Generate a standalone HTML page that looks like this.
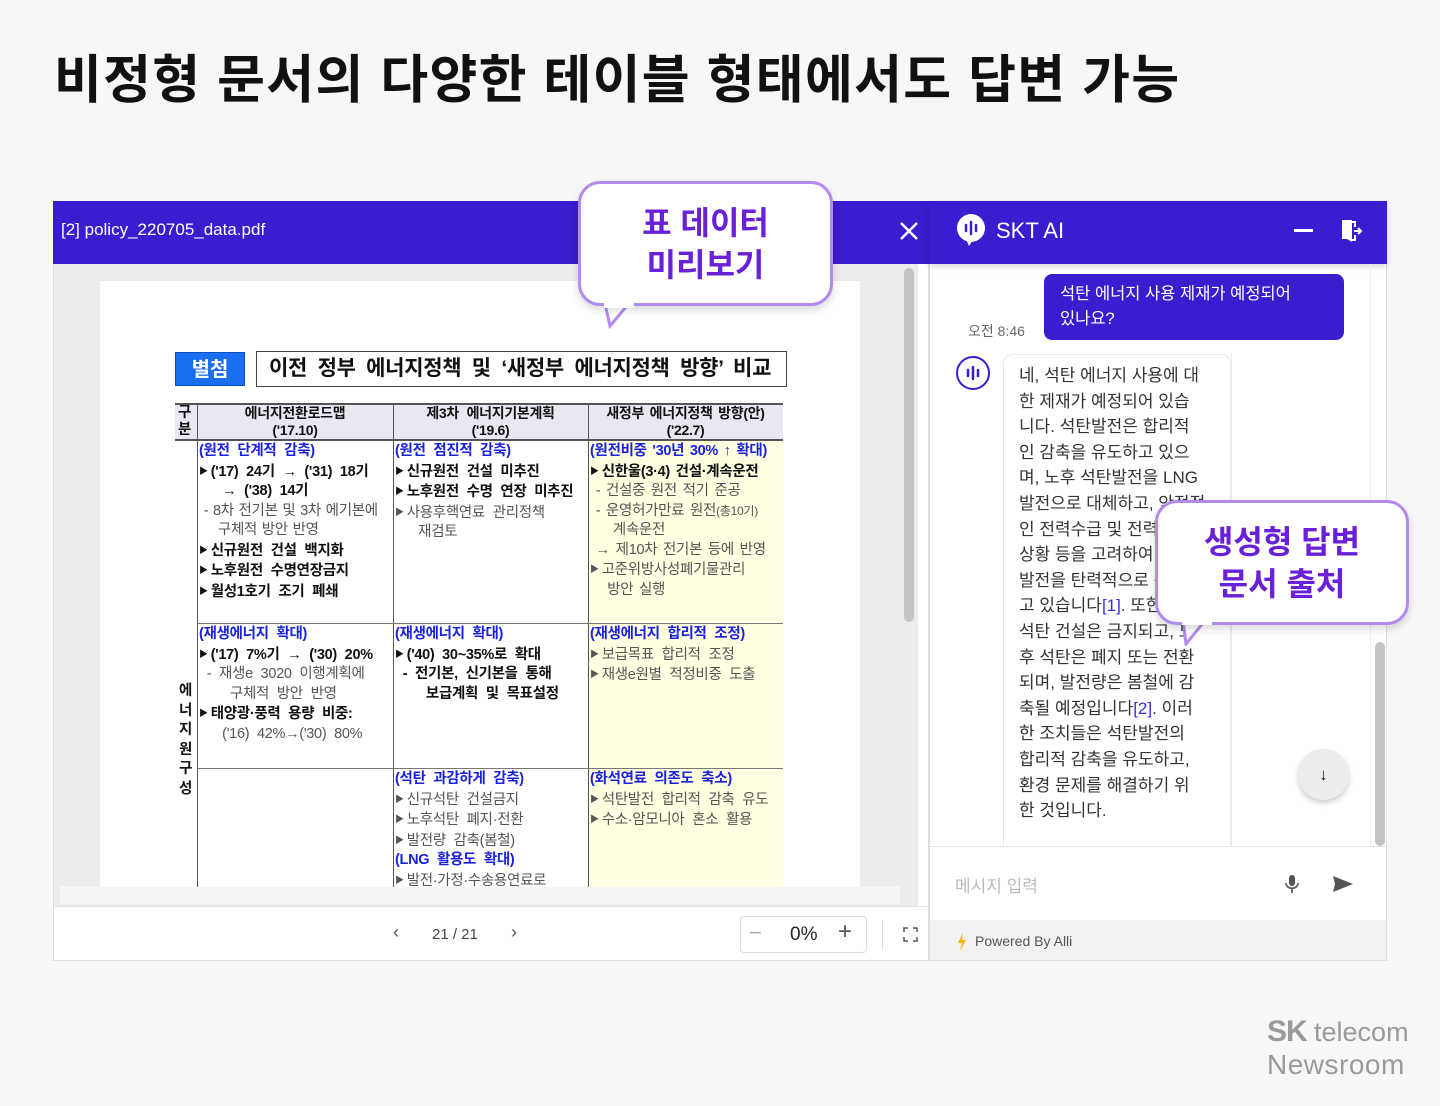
<!DOCTYPE html>
<html><head><meta charset="utf-8">
<style>
*{margin:0;padding:0;box-sizing:border-box}
body{width:1440px;height:1106px;background:#f7f7f7;position:relative;overflow:hidden;font-family:"Liberation Sans","Noto Sans CJK KR",sans-serif;color:#222}
.a{position:absolute}
h1{position:absolute;left:54px;top:38px;font-size:52px;font-weight:700;color:#111;letter-spacing:1.3px;white-space:nowrap}
.hdr{background:#3a1dcf;color:#fff}
.cell{position:absolute;font-size:14.5px;line-height:19.5px;white-space:nowrap;color:#222;letter-spacing:-0.3px;word-spacing:4px}
.bl{color:#1a22e0;font-weight:700}
.b{font-weight:700;color:#111}
.g{color:#555}
.tri{font-size:9px;vertical-align:2px;margin-right:3px}
.ans{font-size:17px;line-height:25.6px;color:#333;white-space:nowrap}
.ref{color:#3a2ee0}
.callout{position:absolute;background:#fff;border:3px solid #b38af0;border-radius:22px;color:#6a1fd8;font-weight:700;font-size:32px;line-height:42px;text-align:center;box-shadow:0 4px 8px rgba(0,0,0,.15)}
</style></head><body>
<h1>비정형 문서의 다양한 테이블 형태에서도 답변 가능</h1>

<div class="a" style="left:53px;top:201px;width:876px;height:760px;background:#fff;border:1px solid #ddd"></div>
<div class="a hdr" style="left:53px;top:201px;width:876px;height:63px"></div>
<div class="a" style="left:61px;top:220px;color:#fff;font-size:17px">[2] policy_220705_data.pdf</div>
<svg class="a" style="left:898px;top:220px" width="22" height="22" viewBox="0 0 22 22"><path d="M3 3L19 19M19 3L3 19" stroke="#fff" stroke-width="2.5"/></svg>
<div class="a" style="left:54px;top:264px;width:864px;height:642px;background:#ececec"></div>
<div class="a" style="left:60px;top:886px;width:840px;height:18px;background:#f4f4f4"></div>
<div class="a" style="left:904px;top:268px;width:10px;height:354px;background:#c4c4c4;border-radius:5px"></div>
<div class="a" style="left:100px;top:281px;width:760px;height:606px;background:#fff"></div>

<div class="a" style="left:175px;top:352px;width:70px;height:34px;background:#1a6ef0;color:#fff;font-weight:700;font-size:20px;text-align:center;line-height:34px;border:1px solid #0d4fc0">별첨</div>
<div class="a" style="left:256px;top:351px;width:531px;height:36px;border:1.5px solid #444;font-size:21px;font-weight:700;line-height:34px;padding-left:12px;color:#111;letter-spacing:-0.3px;word-spacing:5px;white-space:nowrap;overflow:hidden">이전 정부 에너지정책 및 ‘새정부 에너지정책 방향’ 비교</div>

<div class="a" style="left:588px;top:441px;width:195px;height:446px;background:#ffffe2"></div>
<div class="a" style="left:175px;top:403px;width:608px;height:38px;background:#e8e8f2;border-top:2px solid #555;border-bottom:2px solid #555"></div>
<div class="a" style="left:197px;top:403px;width:1px;height:484px;background:#555"></div>
<div class="a" style="left:393px;top:403px;width:1px;height:484px;background:#555"></div>
<div class="a" style="left:588px;top:403px;width:1px;height:484px;background:#555"></div>
<div class="a" style="left:197px;top:623px;width:586px;height:1px;background:#777"></div>
<div class="a" style="left:197px;top:768px;width:586px;height:1px;background:#777"></div>
<div class="cell b" style="left:178px;top:405px;line-height:17px">구<br>분</div>
<div class="cell b" style="left:197px;top:405px;width:196px;text-align:center;line-height:17px;font-size:14px">에너지전환로드맵<br>('17.10)</div>
<div class="cell b" style="left:393px;top:405px;width:195px;text-align:center;line-height:17px;font-size:14px">제3차 에너지기본계획<br>('19.6)</div>
<div class="cell b" style="left:588px;top:405px;width:195px;text-align:center;line-height:17px;font-size:14px;word-spacing:2px">새정부 에너지정책 방향(안)<br>('22.7)</div>
<div class="cell b" style="left:179px;top:682px;line-height:19.5px">에<br>너<br>지<br>원<br>구<br>성</div>

<div class="cell" style="left:199px;top:442px"><span class="bl">(원전 단계적 감축)</span><br><span class="b"><span class="tri">▶</span>('17) 24기 → ('31) 18기<br>&nbsp;&nbsp;&nbsp;→ ('38) 14기</span><br><span class="g" style="word-spacing:1px">&nbsp;- 8차 전기본 및 3차 에기본에<br>&nbsp;&nbsp;&nbsp;&nbsp;구체적 방안 반영</span><br><span class="b"><span class="tri">▶</span>신규원전 건설 백지화<br><span class="tri">▶</span>노후원전 수명연장금지<br><span class="tri">▶</span>월성1호기 조기 폐쇄</span></div>
<div class="cell" style="left:395px;top:442px"><span class="bl">(원전 점진적 감축)</span><br><span class="b"><span class="tri">▶</span>신규원전 건설 미추진<br><span class="tri">▶</span>노후원전 수명 연장 미추진</span><br><span class="g"><span class="tri">▶</span>사용후핵연료 관리정책<br>&nbsp;&nbsp;&nbsp;재검토</span></div>
<div class="cell" style="left:590px;top:442px;word-spacing:2px"><span class="bl">(원전비중 '30년 30% ↑ 확대)</span><br><span class="b"><span class="tri">▶</span>신한울(3·4) 건설·계속운전</span><br><span class="g">&nbsp;- 건설중 원전 적기 준공<br>&nbsp;- 운영허가만료 원전<small>(총10기)</small><br>&nbsp;&nbsp;&nbsp;&nbsp;계속운전<br>&nbsp;→ 제10차 전기본 등에 반영<br><span class="tri">▶</span>고준위방사성폐기물관리<br>&nbsp;&nbsp;&nbsp;방안 실행</span></div>

<div class="cell" style="left:199px;top:625px"><span class="bl">(재생에너지 확대)</span><br><span class="b"><span class="tri">▶</span>('17) 7%기 → ('30) 20%</span><br><span class="g">&nbsp;- 재생e 3020 이행계획에<br>&nbsp;&nbsp;&nbsp;&nbsp;구체적 방안 반영</span><br><span class="b"><span class="tri">▶</span>태양광·풍력 용량 비중:</span><br><span class="g">&nbsp;&nbsp;&nbsp;('16) 42%→('30) 80%</span></div>
<div class="cell" style="left:395px;top:625px"><span class="bl">(재생에너지 확대)</span><br><span class="b"><span class="tri">▶</span>('40) 30~35%로 확대<br>&nbsp;- 전기본, 신기본을 통해<br>&nbsp;&nbsp;&nbsp;&nbsp;보급계획 및 목표설정</span></div>
<div class="cell" style="left:590px;top:625px"><span class="bl">(재생에너지 합리적 조정)</span><br><span class="g"><span class="tri">▶</span>보급목표 합리적 조정<br><span class="tri">▶</span>재생e원별 적정비중 도출</span></div>

<div class="cell" style="left:395px;top:770px"><span class="bl">(석탄 과감하게 감축)</span><br><span class="g"><span class="tri">▶</span>신규석탄 건설금지<br><span class="tri">▶</span>노후석탄 폐지·전환<br><span class="tri">▶</span>발전량 감축(봄철)</span><br><span class="bl">(LNG 활용도 확대)</span><br><span class="g"><span class="tri">▶</span>발전·가정·수송용연료로</span></div>
<div class="cell" style="left:590px;top:770px"><span class="bl">(화석연료 의존도 축소)</span><br><span class="g"><span class="tri">▶</span>석탄발전 합리적 감축 유도<br><span class="tri">▶</span>수소·암모니아 혼소 활용</span></div>

<div class="a" style="left:54px;top:906px;width:874px;height:1px;background:#e2e2e2"></div>
<div class="a" style="left:393px;top:922px;font-size:18px;color:#555">&#8249;</div>
<div class="a" style="left:432px;top:926px;font-size:15px;color:#444">21 / 21</div>
<div class="a" style="left:511px;top:922px;font-size:18px;color:#555">&#8250;</div>
<div class="a" style="left:740px;top:916px;width:127px;height:37px;border:1px solid #ddd;border-radius:4px"></div>
<div class="a" style="left:749px;top:920px;font-size:22px;color:#aaa">−</div>
<div class="a" style="left:790px;top:924px;font-size:19px;color:#222">0%</div>
<div class="a" style="left:838px;top:918px;font-size:24px;color:#555">+</div>
<div class="a" style="left:882px;top:920px;width:1px;height:30px;background:#e2e2e2"></div>
<svg class="a" style="left:903px;top:927px" width="15" height="15" viewBox="0 0 15 15"><path d="M1 5V1H5M10 1H14V5M14 10V14H10M5 14H1V10" fill="none" stroke="#555" stroke-width="1.5"/></svg>

<div class="a" style="left:929px;top:201px;width:458px;height:760px;background:#fff;border:1px solid #ddd"></div>
<div class="a hdr" style="left:929px;top:201px;width:458px;height:63px;box-shadow:0 3px 6px rgba(0,0,0,.15)"></div>
<svg class="a" style="left:956px;top:213px" width="32" height="36" viewBox="0 0 32 36"><circle cx="15" cy="15" r="14" fill="#fff"/><path d="M10 26L13 33L17 27Z" fill="#fff"/><path d="M10 12V18M15 9V21M20 12V18" stroke="#3a1dcf" stroke-width="2.5" stroke-linecap="round"/></svg>
<div class="a" style="left:996px;top:218px;color:#fff;font-size:22px">SKT AI</div>
<div class="a" style="left:1294px;top:229px;width:19px;height:3px;background:#fff"></div>
<svg class="a" style="left:1340px;top:218px" width="24" height="26" viewBox="0 0 24 26"><path d="M2 2H12V24L7 21H2Z" fill="#fff"/><path d="M12 4H15V9M15 17V22H12" fill="none" stroke="#fff" stroke-width="2"/><path d="M14 13H21M18 10L21 13L18 16" fill="none" stroke="#fff" stroke-width="2"/></svg>

<div class="a" style="left:1044px;top:274px;width:300px;height:66px;background:#3a1dcf;border-radius:8px;color:#fff;font-size:16.5px;line-height:25px;padding:8px 16px">석탄 에너지 사용 제재가 예정되어<br>있나요?</div>
<div class="a" style="left:968px;top:321px;font-size:14px;color:#666">오전 8:46</div>

<svg class="a" style="left:955px;top:355px" width="36" height="36" viewBox="0 0 36 36"><circle cx="18" cy="18" r="16" fill="#fff" stroke="#3a1dcf" stroke-width="2"/><path d="M13 15V21M18 12V24M23 15V21" stroke="#3a1dcf" stroke-width="2.5" stroke-linecap="round"/></svg>
<div class="a" style="left:1003px;top:354px;width:228px;height:492px;border:1px solid #e6e6e6;border-bottom:none;border-radius:10px 10px 0 0"></div>
<div class="a ans" style="left:1019px;top:363px">네, 석탄 에너지 사용에 대<br>한 제재가 예정되어 있습<br>니다. 석탄발전은 합리적<br>인 감축을 유도하고 있으<br>며, 노후 석탄발전을 LNG<br>발전으로 대체하고, 안정적<br>인 전력수급 및 전력<br>상황 등을 고려하여 석탄<br>발전을 탄력적으로 운영하<br>고 있습니다<span class="ref">[1]</span>. 또한 신규<br>석탄 건설은 금지되고, 노<br>후 석탄은 폐지 또는 전환<br>되며, 발전량은 봄철에 감<br>축될 예정입니다<span class="ref">[2]</span>. 이러<br>한 조치들은 석탄발전의<br>합리적 감축을 유도하고,<br>환경 문제를 해결하기 위<br>한 것입니다.</div>
<div class="a" style="left:1231px;top:354px;width:1px;height:492px;background:#eee"></div>
<div class="a" style="left:1370px;top:264px;width:1px;height:582px;background:#eee"></div>
<div class="a" style="left:1375px;top:642px;width:10px;height:204px;background:#c4c4c4;border-radius:5px"></div>
<div class="a" style="left:1298px;top:749px;width:51px;height:51px;border-radius:50%;background:#ececec;box-shadow:0 3px 6px rgba(0,0,0,.2);text-align:center;line-height:51px;font-size:17px;color:#222">↓</div>

<div class="a" style="left:930px;top:846px;width:456px;height:1px;background:#e6e6e6"></div>
<div class="a" style="left:955px;top:872px;font-size:17px;color:#bbb">메시지 입력</div>
<svg class="a" style="left:1284px;top:874px" width="16" height="20" viewBox="0 0 16 20"><rect x="5" y="1" width="6" height="11" rx="3" fill="#555"/><path d="M2 9C2 16 14 16 14 9M8 15V19" fill="none" stroke="#555" stroke-width="1.6"/></svg>
<svg class="a" style="left:1332px;top:875px" width="22" height="18" viewBox="0 0 22 18"><path d="M1 1L21 9L1 17L3 9Z" fill="#555"/></svg>
<div class="a" style="left:930px;top:920px;width:456px;height:40px;background:#f1f1f1"></div>
<svg class="a" style="left:957px;top:933px" width="10" height="18" viewBox="0 0 10 18"><path d="M6 0L1 10H5L3 18L9 7H5Z" fill="#f5b400"/></svg>
<div class="a" style="left:975px;top:933px;font-size:14px;color:#555">Powered By Alli</div>

<svg class="a" style="left:600px;top:295px" width="40" height="34" viewBox="0 0 40 34"><path d="M3 0L10 31L36 0Z" fill="#fff" stroke="#b38af0" stroke-width="3"/></svg>
<div class="callout" style="left:578px;top:181px;width:255px;height:125px;padding-top:18px">표 데이터<br>미리보기</div>
<div class="a" style="left:604px;top:300px;width:30px;height:8px;background:#fff"></div>

<svg class="a" style="left:1178px;top:612px" width="40" height="34" viewBox="0 0 40 34"><path d="M4 0L8 32L34 0Z" fill="#fff" stroke="#b38af0" stroke-width="3"/></svg>
<div class="callout" style="left:1155px;top:500px;width:254px;height:125px;padding-top:18px">생성형 답변<br>문서 출처</div>
<div class="a" style="left:1182px;top:617px;width:30px;height:8px;background:#fff"></div>

<div class="a" style="left:1267px;top:1015px;font-size:30px;color:#9a9a9a;font-weight:700;letter-spacing:-1px">SK <span style="font-weight:400;font-size:27px;letter-spacing:0">telecom</span></div>
<div class="a" style="left:1267px;top:1049px;font-size:28px;color:#9a9a9a;letter-spacing:0.5px">Newsroom</div>
</body></html>
